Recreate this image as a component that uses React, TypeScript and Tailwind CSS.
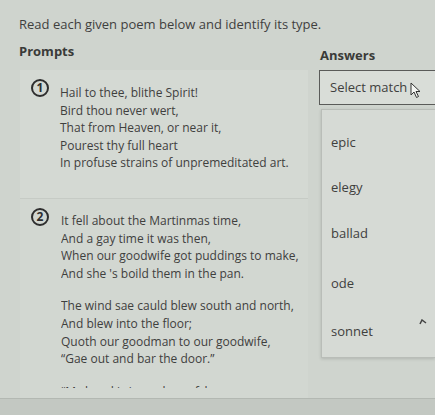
import React from "react";

const poem1 = [
  "Hail to thee, blithe Spirit!",
  "Bird thou never wert,",
  "That from Heaven, or near it,",
  "Pourest thy full heart",
  "In profuse strains of unpremeditated art.",
];

const stanzas2 = [
  [
    "It fell about the Martinmas time,",
    "And a gay time it was then,",
    "When our goodwife got puddings to make,",
    "And she 's boild them in the pan.",
  ],
  [
    "The wind sae cauld blew south and north,",
    "And blew into the floor;",
    "Quoth our goodman to our goodwife,",
    "\u201CGae out and bar the door.\u201D",
  ],
  ["\u201CMy hand is in my hussyfskap,"],
];

const answers = [
  { t: "epic", mt: "mt-[23px]" },
  { t: "elegy", mt: "mt-[27px]" },
  { t: "ballad", mt: "mt-[28px]" },
  { t: "ode", mt: "mt-[32px]" },
  { t: "sonnet", mt: "mt-[30px]" },
];

function Num({ n }: { n: number }) {
  return (
    <div className="w-[18px] h-[18px] shrink-0 rounded-full border-2 border-[#2e2e2e] flex items-center justify-center text-[12px] font-bold leading-none text-[#2e2e2e]">
      {n}
    </div>
  );
}

export default function App() {
  return (
    <div
      className="w-[435px] h-[415px] overflow-hidden bg-[#cfd4ce] text-[#3f403e] flex flex-col"
      style={{ fontFamily: "'Open Sans', 'Noto Sans', sans-serif" }}
    >
      <div className="flex-1 min-h-0 flex flex-col overflow-hidden">
        <div className="pl-[19px] pt-[15px] text-[13px] leading-[18px]">
          Read each given poem below and identify its type.
        </div>
        <div className="flex flex-1 min-h-0">
          <div className="w-[308px] shrink-0 flex flex-col">
            <div className="pl-[19px] pt-[9px] text-[13px] font-bold leading-[18px] text-[#3a3b39]">
              Prompts
            </div>
            <div className="ml-[20px] mt-[10px] flex-1 min-h-0 flex flex-col overflow-hidden">
              <div className="h-[129px] bg-[#d4d9d3] flex pl-[11px] pt-[9px] gap-[11px] border-b border-[#c6cbc5]">
                <Num n={1} />
                <div className="pt-[5px] text-[12px] leading-[17.6px] whitespace-nowrap">
                  {poem1.map((l) => (
                    <div key={l}>{l}</div>
                  ))}
                </div>
              </div>
              <div className="flex-1 min-h-0 bg-[#d2d7d1] flex pl-[11px] pt-[9px] gap-[12px] overflow-hidden">
                <Num n={2} />
                <div className="pt-[4px] text-[12px] leading-[17.6px] h-[180px] overflow-hidden whitespace-nowrap">
                  {stanzas2.map((s, i) => (
                    <div key={i} className={i > 0 ? "mt-[15px]" : ""}>
                      {s.map((l) => (
                        <div key={l}>{l}</div>
                      ))}
                    </div>
                  ))}
                </div>
              </div>
            </div>
          </div>
          <div className="flex-1 flex flex-col pl-[11px]">
            <div className="pl-[1px] pt-[13px] text-[13px] font-bold leading-[18px] text-[#3a3b39]">
              Answers
            </div>
            <div className="mt-[6px] h-[35px] border-[1.5px] border-r-0 border-[#5a5b59] bg-[#d9ddd8] flex items-center pl-[10px] text-[13px] relative">
              Select match
              <svg
                className="absolute left-[90px] top-[11px]"
                width="12"
                height="17"
                viewBox="0 0 12 17"
              >
                <path
                  d="M1 1 L1 13 L4 10 L6.5 15.5 L8.5 14.5 L6 9.5 L10 9.5 Z"
                  fill="#f4f6f3"
                  stroke="#333"
                  strokeWidth="1"
                  strokeLinejoin="round"
                />
              </svg>
            </div>
            <div className="ml-[2px] mt-[4px] h-[249px] border border-r-0 border-[#b9bdb8] bg-[#d6dad5] shadow-[0_1px_3px_rgba(0,0,0,0.15)] pl-[9px] text-[13px] leading-[18px] relative">
              {answers.map((a) => (
                <div key={a.t} className={a.mt}>
                  {a.t}
                </div>
              ))}
              <svg className="absolute left-[97px] top-[209px]" width="8" height="6" viewBox="0 0 8 6">
                <path d="M1 5 L3 1 L7 4" fill="none" stroke="#444" strokeWidth="1.5" />
              </svg>
            </div>
          </div>
        </div>
      </div>
      <div className="h-[17px] shrink-0 bg-[#c3c8c2] border-t border-[#b3b8b2]" />
    </div>
  );
}
